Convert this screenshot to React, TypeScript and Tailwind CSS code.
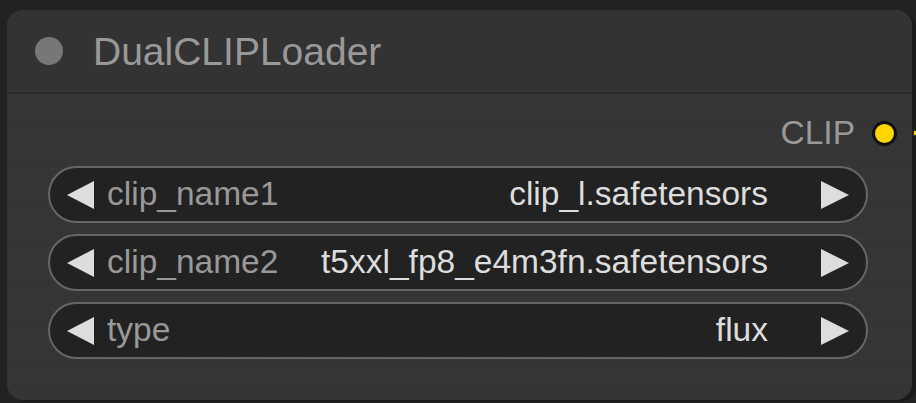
import React from "react";

interface ComboWidgetProps {
  label: string;
  value: string;
}

function ArrowLeft() {
  return (
    <svg width="27" height="28" viewBox="0 0 27 28" className="shrink-0">
      <polygon points="27,0 27,28 0,14" fill="#dddddd" />
    </svg>
  );
}

function ArrowRight() {
  return (
    <svg width="28" height="28" viewBox="0 0 28 28" className="shrink-0">
      <polygon points="0,0 0,28 28,14" fill="#dddddd" />
    </svg>
  );
}

function ComboWidget({ label, value }: ComboWidgetProps) {
  return (
    <div className="flex h-[57px] items-center rounded-full border-2 border-[#666666] bg-[#222222] pl-[17px] pr-[17px]">
      <ArrowLeft />
      <span className="ml-[13px] text-[#999999]">{label}</span>
      <span className="ml-auto whitespace-nowrap pl-6 text-[#dddddd]">{value}</span>
      <span className="ml-[53px] flex">
        <ArrowRight />
      </span>
    </div>
  );
}

export default function App() {
  return (
    <div
      className="relative h-[403px] w-[916px] overflow-hidden bg-[#222222] pl-[7px] pt-[10px]"
      style={{ fontFamily: '"Liberation Sans", Arial, sans-serif' }}
    >
      {/* Node */}
      <div className="h-[390px] w-[905px] overflow-hidden rounded-[16px] bg-[#353535] shadow-[4px_2px_0_#1a1a1a]">
        {/* Title bar */}
        <div className="flex h-[84px] items-center border-b-2 border-[#2a2a2a] bg-[#333333] pl-[28px]">
          <div className="h-[28px] w-[28px] rounded-full bg-[#777777]" />
          <span className="ml-[30px] mt-[3px] text-[39px] leading-[1.2] text-[#999999]">
            DualCLIPLoader
          </span>
        </div>

        {/* Body */}
        <div className="bg-[radial-gradient(circle,#3a3a3a_1px,transparent_1.2px)] bg-[length:10px_10px] pb-6 pt-[11px] text-[33.5px] leading-[1.2]">
          {/* Output slot */}
          <div className="flex h-[56px] items-center justify-end pr-[15px]">
            <span className="text-[#999999]">CLIP</span>
            <div className="ml-[17px] h-[25px] w-[25px] rounded-full border-[3px] border-[#111111] bg-[#ffd500]" />
          </div>

          {/* Widgets */}
          <div className="ml-[41px] mr-[44px] mt-[5px] flex flex-col gap-[11px]">
            <ComboWidget label="clip_name1" value="clip_l.safetensors" />
            <ComboWidget label="clip_name2" value="t5xxl_fp8_e4m3fn.safetensors" />
            <ComboWidget label="type" value="flux" />
          </div>
        </div>
      </div>

      {/* Link stub leaving the output */}
      <div className="absolute left-[913px] top-[130px] h-[6px] w-[6px] rounded-[1px] border border-[#333300] bg-[#ffd500]" />
    </div>
  );
}
